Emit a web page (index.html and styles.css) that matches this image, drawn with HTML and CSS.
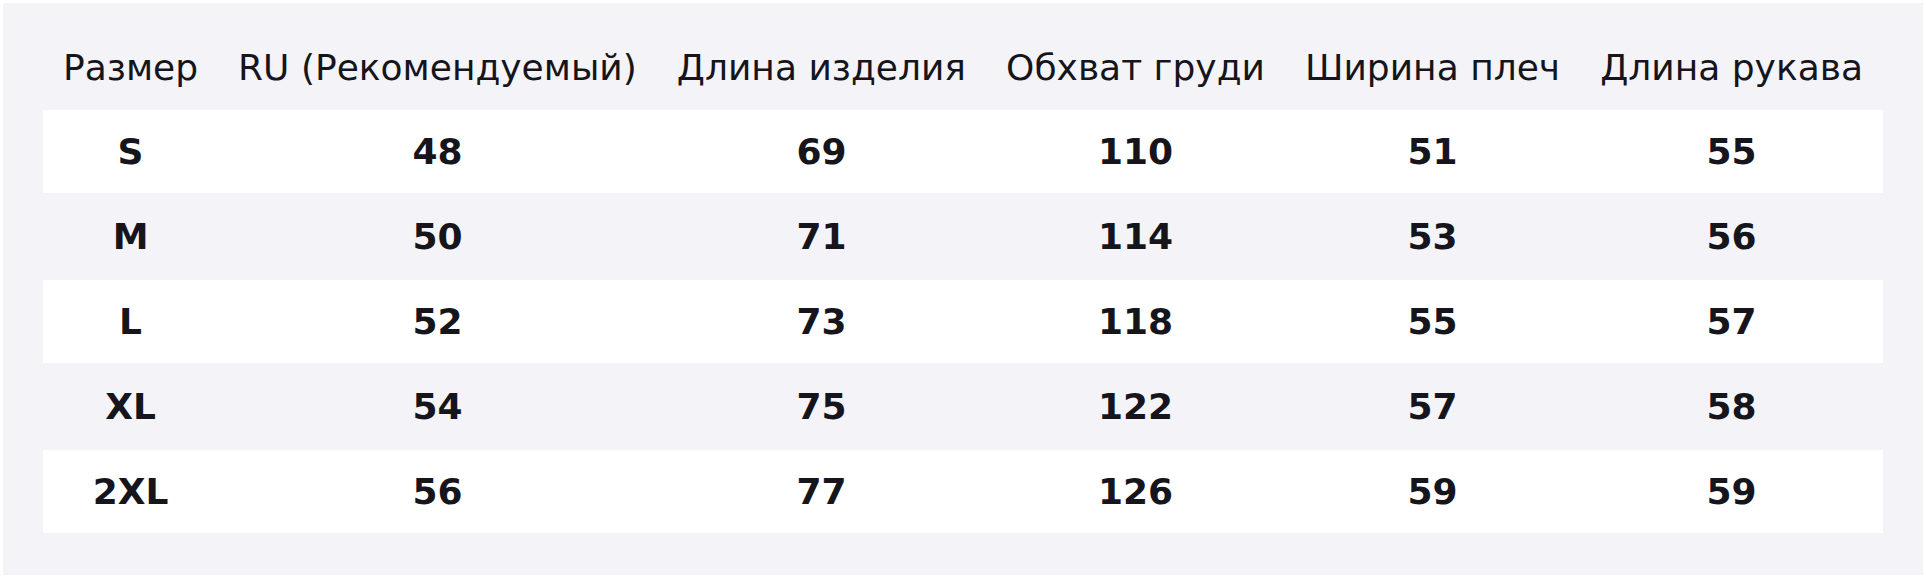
FILE: index.html
```html
<!DOCTYPE html>
<html lang="ru">
<head>
<meta charset="utf-8">
<title>Таблица размеров</title>
<link rel="stylesheet" href="styles.css">
</head>
<body>
<div class="frame">
  <div class="panel">
    <table class="sizes">
      <thead>
        <tr>
          <th>Размер</th>
          <th>RU (Рекомендуемый)</th>
          <th>Длина изделия</th>
          <th>Обхват груди</th>
          <th>Ширина плеч</th>
          <th>Длина рукава</th>
        </tr>
      </thead>
      <tbody>
        <tr class="light"><td>S</td><td>48</td><td>69</td><td>110</td><td>51</td><td>55</td></tr>
        <tr class="shade"><td>M</td><td>50</td><td>71</td><td>114</td><td>53</td><td>56</td></tr>
        <tr class="light"><td>L</td><td>52</td><td>73</td><td>118</td><td>55</td><td>57</td></tr>
        <tr class="shade"><td>XL</td><td>54</td><td>75</td><td>122</td><td>57</td><td>58</td></tr>
        <tr class="light"><td>2XL</td><td>56</td><td>77</td><td>126</td><td>59</td><td>59</td></tr>
      </tbody>
    </table>
  </div>
</div>
</body>
</html>
```
FILE: styles.css
```css
html, body {
  margin: 0;
  padding: 0;
  background: #ffffff;
}

.frame {
  padding: 3px;
  width: 1926px;
  box-sizing: border-box;
}

.panel {
  background: #f4f4f8;
  padding: 40px 40px 42px;
}

.sizes {
  width: 100%;
  table-layout: auto;
  border-collapse: collapse;
  font-family: "DejaVu Sans", sans-serif;
  font-size: 36px;
  line-height: 42px;
  color: #15151b;
}

.sizes th {
  font-weight: normal;
  text-align: center;
  white-space: nowrap;
  padding: 3.5px 20px 21.5px;
}

.sizes td {
  font-weight: bold;
  text-align: center;
  white-space: nowrap;
  padding: 0 20px;
}

.sizes .light td {
  background: #ffffff;
  padding-top: 20.5px;
  padding-bottom: 20.5px;
}

.sizes .shade td {
  padding-top: 22.5px;
  padding-bottom: 22.5px;
}
```
